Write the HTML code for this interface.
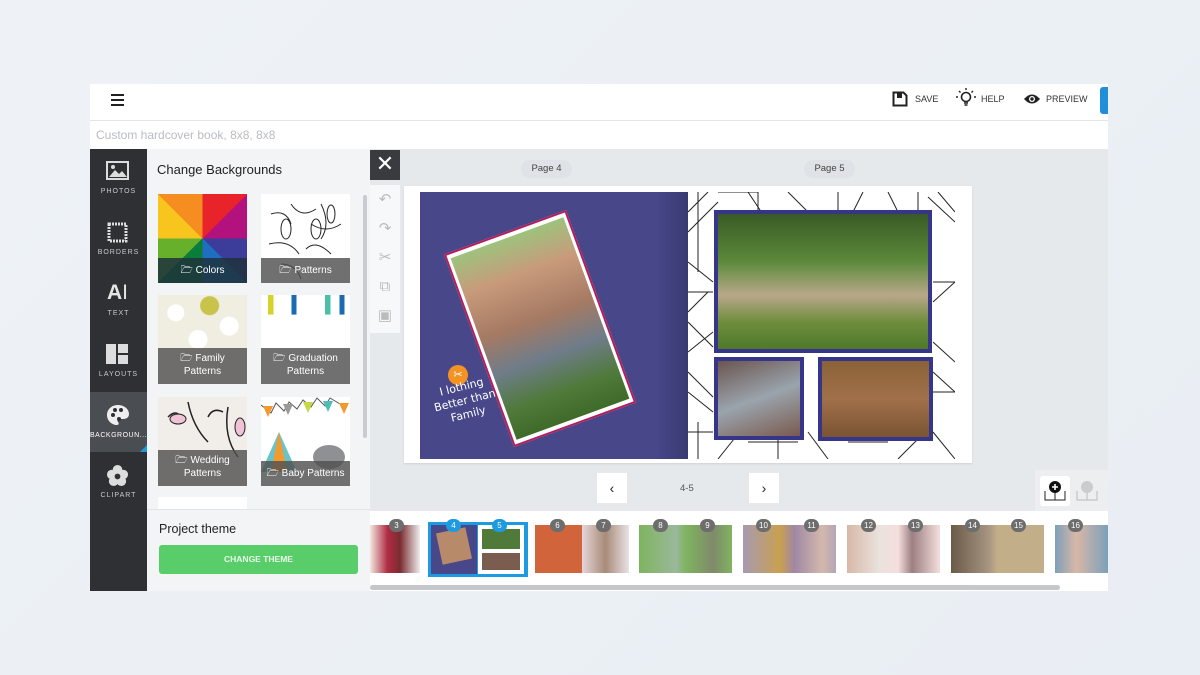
<!DOCTYPE html>
<html><head><meta charset="utf-8"><style>
*{box-sizing:border-box;margin:0;padding:0}
body{width:1200px;height:675px;background:linear-gradient(135deg,#eef2f6,#e9eef4);font-family:"Liberation Sans",sans-serif;position:relative;overflow:hidden}
.a{position:absolute}
.lbl{color:#c9cacc;font-size:7px;letter-spacing:1px;width:57px;text-align:center;left:0}
.tile{position:absolute;width:89px;height:89px;overflow:hidden}
.cap{position:absolute;left:0;right:0;bottom:0;background:rgba(80,80,80,.82);color:#fff;font-size:10px;text-align:center;line-height:13px}
.thumb{position:absolute;top:525px;height:48px}
.num{position:absolute;top:519px;width:15px;height:13px;border-radius:7px;background:#6d6d6d;color:#fff;font-size:8px;text-align:center;line-height:13px}
</style></head><body>
<div class="a" style="left:90px;top:84px;width:1018px;height:507px;background:#fff"></div>
<div class="a" style="left:90px;top:120px;width:1018px;height:1px;background:#e3e5e8"></div>
<div class="a" style="left:111px;top:94px;width:13px;height:12px;border-top:2px solid #222;border-bottom:2px solid #222"><div style="margin-top:3px;height:2px;background:#222"></div></div>
<svg class="a" style="left:892px;top:91px" width="16" height="16" viewBox="0 0 16 16"><path d="M1.5 1.5h10l3 3v10h-13z" fill="none" stroke="#222" stroke-width="2"/><rect x="5" y="2" width="5" height="5" fill="#222"/></svg>
<div class="a" style="left:915px;top:94px;font-size:9px;color:#333">SAVE</div>
<svg class="a" style="left:955px;top:87px" width="22" height="22" viewBox="0 0 22 22"><circle cx="11" cy="10" r="4.5" fill="none" stroke="#222" stroke-width="1.6"/><path d="M9 16h4M9.5 18h3M11 1v2M4 4l1.5 1.5M18 4l-1.5 1.5M1 10h2M19 10h2" stroke="#222" stroke-width="1.4"/></svg>
<div class="a" style="left:981px;top:94px;font-size:9px;color:#333">HELP</div>
<svg class="a" style="left:1023px;top:93px" width="18" height="12" viewBox="0 0 18 12"><path d="M1 6Q9-3 17 6Q9 15 1 6z" fill="#222"/><circle cx="9" cy="6" r="3" fill="#fff"/><circle cx="9" cy="6" r="1.7" fill="#222"/></svg>
<div class="a" style="left:1046px;top:94px;font-size:9px;color:#333">PREVIEW</div>
<div class="a" style="left:1100px;top:87px;width:8px;height:27px;background:#1e8fd8;border-radius:3px 0 0 3px"></div>
<div class="a" style="left:96px;top:128px;font-size:12px;color:#b9bcc0">Custom hardcover book, 8x8, 8x8</div>
<div class="a" style="left:370px;top:149px;width:738px;height:362px;background:#e6e9ec"></div>
<div class="a" style="left:90px;top:149px;width:57px;height:442px;background:#2f3033"></div>
<div class="a" style="left:90px;top:392px;width:57px;height:60px;background:#4a4d52"></div>
<div class="a" style="left:140px;top:445px;width:0;height:0;border-left:7px solid transparent;border-bottom:7px solid #1e9be0"></div>
<svg class="a" style="left:106px;top:161px" width="23" height="19"><rect x="1" y="1" width="21" height="17" fill="none" stroke="#ddd" stroke-width="2"/><path d="M3 16l6-7 4 4 3-3 5 6z" fill="#ddd"/><circle cx="7" cy="6" r="2" fill="#ddd"/></svg>
<div class="a lbl" style="left:90px;top:188px">PHOTOS</div>
<svg class="a" style="left:106px;top:221px" width="23" height="23"><rect x="3" y="3" width="17" height="17" fill="none" stroke="#ddd" stroke-width="3" stroke-dasharray="2 1"/></svg>
<div class="a lbl" style="left:90px;top:249px">BORDERS</div>
<div class="a" style="left:107px;top:281px;font-size:21px;font-weight:bold;color:#e6e6e6">A<span style="font-weight:normal">I</span></div>
<div class="a lbl" style="left:90px;top:310px">TEXT</div>
<svg class="a" style="left:106px;top:344px" width="22" height="20"><rect x="0" y="0" width="10" height="20" fill="#ddd"/><rect x="12" y="0" width="10" height="9" fill="#ddd"/><rect x="12" y="11" width="10" height="9" fill="#ddd"/></svg>
<div class="a lbl" style="left:90px;top:371px">LAYOUTS</div>
<svg class="a" style="left:106px;top:404px" width="24" height="22" viewBox="0 0 24 22"><path d="M12 1C5 1 1 6 1 11c0 6 5 10 10 10 2 0 2-2 1-3s0-3 2-3h3c4 0 6-2 6-5C23 5 18 1 12 1z" fill="#eee"/><circle cx="7" cy="11" r="2" fill="#2f3033"/><circle cx="9" cy="6" r="2" fill="#2f3033"/><circle cx="15" cy="6" r="2" fill="#2f3033"/><circle cx="13" cy="15" r="2" fill="#2f3033"/></svg>
<div class="a lbl" style="left:90px;top:432px;color:#fff;letter-spacing:.5px">BACKGROUN...</div>
<svg class="a" style="left:106px;top:464px" width="23" height="23" viewBox="0 0 24 24"><g fill="#ddd"><circle cx="12" cy="6" r="5"/><circle cx="18" cy="11" r="5"/><circle cx="16" cy="18" r="5"/><circle cx="8" cy="18" r="5"/><circle cx="6" cy="11" r="5"/></g><circle cx="12" cy="13" r="3" fill="#2f3033"/></svg>
<div class="a lbl" style="left:90px;top:492px">CLIPART</div>
<div class="a" style="left:147px;top:149px;width:223px;height:442px;background:#f3f4f6"></div>
<div class="a" style="left:157px;top:162px;font-size:13px;color:#222">Change Backgrounds</div>
<div class="a" style="left:363px;top:195px;width:4px;height:243px;background:#c9cbcf;border-radius:2px"></div>
<div class="tile" style="left:158px;top:194px;background:conic-gradient(from 0deg at 50% 50%,#e8232a 0 45deg,#b3117e 45deg 90deg,#3c3c9b 90deg 135deg,#1f6fc0 135deg 180deg,#0b7d3a 180deg 225deg,#67b02b 225deg 270deg,#f7c51d 270deg 315deg,#f58d21 315deg)"><div class="cap" style="height:25px;line-height:25px;background:rgba(30,50,60,.85)">🗁 Colors</div></div>
<div class="tile" style="left:261px;top:194px;background:#fff">
<svg width="89" height="89"><g fill="none" stroke="#222"><path d="M10 20q15-5 20 10M30 10q10 15 25 5M50 30q15 10 30 0M8 50q20-5 30 10M45 55q10-10 25 5M20 70q15 0 20 15M60 10q10 20 0 35"/><ellipse cx="25" cy="35" rx="5" ry="10"/><ellipse cx="55" cy="35" rx="5" ry="10"/><ellipse cx="70" cy="20" rx="4" ry="9"/></g></svg>
<div class="cap" style="height:25px;line-height:25px">🗁 Patterns</div></div>
<div class="tile" style="left:158px;top:295px;background:radial-gradient(circle at 20% 20%,#fff 8px,transparent 9px),radial-gradient(circle at 45% 50%,#fff 9px,transparent 10px),radial-gradient(circle at 58% 12%,#c9c34c 9px,transparent 10px),radial-gradient(circle at 80% 35%,#fff 9px,transparent 10px),#f0eee0"><div class="cap" style="height:36px;padding-top:4px">🗁 Family<br>Patterns</div></div>
<div class="tile" style="left:261px;top:295px;background:linear-gradient(90deg,transparent 8%,#d5d22c 8% 14%,transparent 14% 34%,#1d6ab4 34% 40%,transparent 40% 72%,#4cbfa7 72% 78%,transparent 78% 88%,#1d6ab4 88% 94%,transparent 94%) top/100% 22% no-repeat,#fff"><div class="cap" style="height:36px;padding-top:4px">🗁 Graduation<br>Patterns</div></div>
<div class="tile" style="left:158px;top:397px;background:#f1eeea"><svg width="89" height="89"><g fill="none" stroke="#222" stroke-width="1.5"><path d="M10 20q10-10 15 5M30 5q5 25 20 40M50 20q5-10 15-5M70 10q-5 30 10 50"/></g><ellipse cx="20" cy="22" rx="8" ry="5" fill="#f0c2d5" stroke="#222"/><ellipse cx="82" cy="30" rx="5" ry="9" fill="#f0c2d5" stroke="#222"/></svg><div class="cap" style="height:36px;padding-top:4px">🗁 Wedding<br>Patterns</div></div>
<div class="tile" style="left:261px;top:397px;background:#fff"><svg width="89" height="89"><path d="M0 8l10 8 5-10 8 8 5-9 8 7 6-9 8 7 6-9 8 8 5-8 10 6" fill="none" stroke="#555"/><polygon points="2,9 12,9 7,20" fill="#f39a2e"/><polygon points="22,7 32,7 27,18" fill="#999"/><polygon points="42,5 52,5 47,16" fill="#c7d844"/><polygon points="62,4 72,4 67,15" fill="#4cbfb5"/><polygon points="78,6 88,6 83,17" fill="#f39a2e"/><path d="M0 75l18-40 18 40z" fill="#6bc3c8"/><path d="M10 75l8-40 8 40z" fill="#f39a2e"/><ellipse cx="68" cy="60" rx="16" ry="12" fill="#8e9094"/></svg><div class="cap" style="height:25px;line-height:25px">🗁 Baby Patterns</div></div>
<div class="tile" style="left:158px;top:497px;height:13px;background:#fff"></div>
<div class="a" style="left:147px;top:509px;width:223px;height:82px;background:#f3f4f6;border-top:1px solid #e3e4e6"></div>
<div class="a" style="left:159px;top:522px;font-size:12.5px;color:#222">Project theme</div>
<div class="a" style="left:159px;top:545px;width:199px;height:29px;background:#58cd6a;border-radius:3px;color:#e8fbe9;font-size:8.5px;font-weight:bold;text-align:center;line-height:29px">CHANGE THEME</div>
<div class="a" style="left:370px;top:150px;width:30px;height:30px;background:#3a3b3e;color:#fff;font-size:22px;text-align:center;line-height:28px">✕</div>
<div class="a" style="left:370px;top:185px;width:30px;height:148px;background:#f7f8f9;color:#bbb;font-size:15px;text-align:center;line-height:29px">↶<br>↷<br>✂<br>⧉<br>▣</div>
<div class="a" style="left:521px;top:160px;width:51px;height:18px;border-radius:9px;background:#dfe2e6;font-size:9.5px;color:#444;text-align:center;line-height:18px">Page 4</div>
<div class="a" style="left:804px;top:160px;width:51px;height:18px;border-radius:9px;background:#dfe2e6;font-size:9.5px;color:#444;text-align:center;line-height:18px">Page 5</div>
<div class="a" style="left:404px;top:186px;width:568px;height:277px;background:#fff;box-shadow:0 1px 2px rgba(0,0,0,.1)"></div>
<div class="a" style="left:420px;top:192px;width:268px;height:267px;background:linear-gradient(90deg,#47478a 88%,#3a3a72);overflow:hidden">
<div class="a" style="left:55px;top:34px;width:130px;height:205px;background:#fff;border:2px solid #b31e5a;transform:rotate(-20deg)"></div>
<div class="a" style="left:60px;top:40px;width:120px;height:193px;background:linear-gradient(180deg,#9ec27c 0%,#c89a7b 20%,#a57a63 45%,#6f7c8a 65%,#4f7a39 85%,#3e6a2a);transform:rotate(-20deg)"></div>
<div class="a" style="left:28px;top:173px;width:20px;height:20px;border-radius:50%;background:#f39324;color:#fff;font-size:11px;text-align:center;line-height:20px">✂</div>
<div class="a" style="left:10px;top:188px;width:70px;color:#fff;font-size:11px;text-align:center;line-height:14px;transform:rotate(-14deg);font-family:'DejaVu Sans',sans-serif">I lothing<br>Better than<br>Family</div>
</div>
<div class="a" style="left:688px;top:192px;width:267px;height:267px;background:#fff;overflow:hidden">
<svg width="267" height="267"><g stroke="#222" fill="none" stroke-width="1"><path d="M0 20l20-20M0 40l30-30M10 0v80M30 0h40v30M60 0l20 30M80 20h50M150 0v40h60M200 0l20 40M230 0v60M250 0l17 20M0 100h25M0 130l25 25M0 160l25-20M0 200l25 20M0 240h25M10 230v37M30 267l20-25M60 250h50M120 240l20 27M160 250h40M210 267l20-20M245 90h22M245 150l22 20M245 200h22M245 240l22 27M0 70l25 20M0 120l20-20M0 180l25 25M100 0l20 20M175 0l-10 20M245 110l22-20M245 180l22 20M90 240v27M240 5l27 25"/></g></svg></div>
<div class="a" style="left:714px;top:210px;width:218px;height:143px;border:4px solid #35358a;background:linear-gradient(180deg,#3a5a26 0%,#5a8a3a 35%,#b9a88a 60%,#6f8d3c 80%,#4d7a2a)"></div>
<div class="a" style="left:714px;top:357px;width:90px;height:83px;border:4px solid #35358a;background:linear-gradient(160deg,#6b5550,#9aa4ad 50%,#7a5a4e)"></div>
<div class="a" style="left:818px;top:357px;width:115px;height:84px;border:4px solid #35358a;background:linear-gradient(180deg,#8a6238,#a1704a 50%,#7b5433)"></div>
<div class="a" style="left:597px;top:473px;width:30px;height:30px;background:#fff;font-size:14px;text-align:center;line-height:30px;color:#222">‹</div>
<div class="a" style="left:680px;top:483px;font-size:9.5px;color:#555">4-5</div>
<div class="a" style="left:749px;top:473px;width:30px;height:30px;background:#fff;font-size:14px;text-align:center;line-height:30px;color:#222">›</div>
<div class="a" style="left:1035px;top:470px;width:73px;height:41px;background:#eceef0"></div>
<div class="a" style="left:1040px;top:476px;width:30px;height:30px;background:#fff;border-radius:3px"></div>
<svg class="a" style="left:1043px;top:479px" width="24" height="24"><path d="M2 12v9h20v-9" fill="none" stroke="#222"/><path d="M12 13v8" stroke="#222"/><circle cx="12" cy="8" r="6" fill="#111"/><path d="M12 5v6M9 8h6" stroke="#fff" stroke-width="1.6"/></svg>
<svg class="a" style="left:1075px;top:479px" width="24" height="24"><path d="M2 12v9h20v-9" fill="none" stroke="#bbb"/><path d="M12 13v8" stroke="#bbb"/><circle cx="12" cy="8" r="6" fill="#ccc"/></svg>
<div class="thumb" style="left:370px;width:50px;background:linear-gradient(90deg,#f1e9de,#b02d45 35%,#7a2b30 60%,#eee)"></div>
<div class="a" style="left:428px;top:522px;width:100px;height:55px;background:#1e9be0"></div>
<div class="thumb" style="left:431px;top:525px;width:46px;height:49px;background:#47478a"><div style="margin:5px 8px;height:32px;background:#b78b6a;transform:rotate(-12deg)"></div></div>
<div class="thumb" style="left:478px;top:525px;width:46px;height:49px;background:#fff"><div style="margin:4px;height:20px;background:#4f7a39"></div><div style="margin:2px 4px;height:17px;background:#7a5d4e"></div></div>
<div class="thumb" style="left:535px;width:47px;background:#d1643b"></div>
<div class="thumb" style="left:582px;width:47px;background:linear-gradient(90deg,#e5d5d8,#a88b78 50%,#e9e2e6)"></div>
<div class="thumb" style="left:639px;width:93px;background:linear-gradient(90deg,#7fb45f,#9ab89a 40%,#7fb45f 50%,#7f8a6a 80%,#7fb45f)"></div>
<div class="thumb" style="left:743px;width:93px;background:linear-gradient(90deg,#a79ab2,#c9a04f 40%,#9f87a5 55%,#d4b8ad 85%,#b3a6b5)"></div>
<div class="thumb" style="left:847px;width:93px;background:linear-gradient(90deg,#d8b8a8,#eae2de 35%,#f5dede 55%,#9c7f82 70%,#f5dede)"></div>
<div class="thumb" style="left:951px;width:93px;background:linear-gradient(90deg,#6a5a48,#a69481 40%,#c3ae8a 50%,#c3ae8a)"></div>
<div class="thumb" style="left:1055px;width:53px;background:linear-gradient(90deg,#7ca0b8,#d9b7a8 40%,#7ca0b8)"></div>
<div class="num" style="left:389px">3</div><div class="num" style="left:446px;background:#1e9be0">4</div><div class="num" style="left:492px;background:#1e9be0">5</div>
<div class="num" style="left:550px">6</div><div class="num" style="left:596px">7</div><div class="num" style="left:653px">8</div><div class="num" style="left:700px">9</div>
<div class="num" style="left:756px">10</div><div class="num" style="left:804px">11</div><div class="num" style="left:861px">12</div><div class="num" style="left:908px">13</div>
<div class="num" style="left:965px">14</div><div class="num" style="left:1011px">15</div><div class="num" style="left:1068px">16</div>
<div class="a" style="left:370px;top:585px;width:690px;height:5px;background:#c5c7ca;border-radius:3px"></div>
</body></html>
